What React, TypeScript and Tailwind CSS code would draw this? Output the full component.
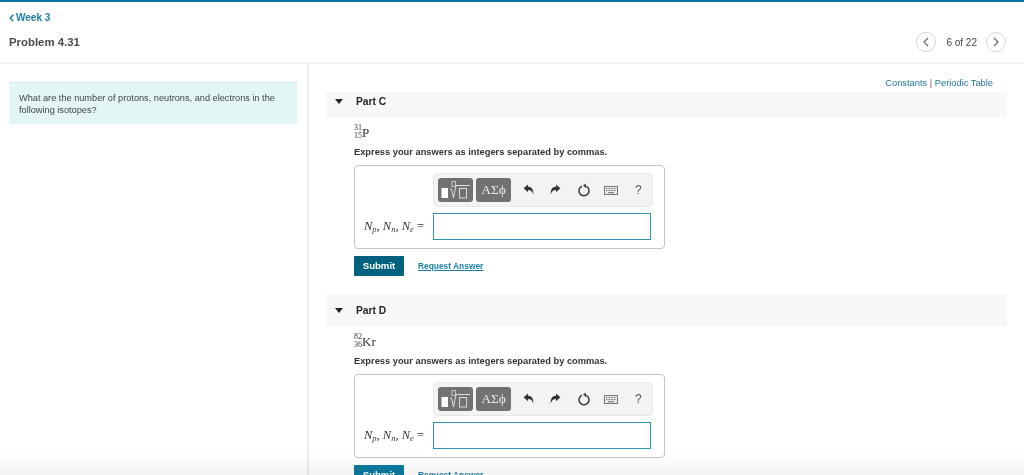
const sans = { fontFamily: '"Liberation Sans", Arial, sans-serif' };

function ChevronCircle({ dir }: { dir: "left" | "right" }) {
  return (
    <div className="w-[20px] h-[20px] rounded-full border border-[#d5d5d5] flex items-center justify-center bg-white">
      <svg width="8" height="10" viewBox="0 0 8 10" fill="none" stroke="#666" strokeWidth="1.2">
        <path d={dir === "left" ? "M6 1 L2 5 L6 9" : "M2 1 L6 5 L2 9"} />
      </svg>
    </div>
  );
}

function TemplatesIcon() {
  return (
    <svg width="30" height="19" viewBox="0 0 30 19" fill="none">
      <rect x="0.5" y="7" width="6.5" height="10" fill="#fff" />
      <rect x="11" y="0.5" width="3.5" height="5" stroke="#d8d8d8" strokeWidth="0.8" />
      <path d="M9 8 L10.5 8 L12.5 17 L15 4.5 L29 4.5" stroke="#e4e4e4" strokeWidth="0.9" />
      <rect x="18.5" y="7.5" width="7" height="9.5" stroke="#e4e4e4" strokeWidth="0.9" />
    </svg>
  );
}

function UndoIcon({ flip }: { flip?: boolean }) {
  return (
    <svg width="11" height="12" viewBox="0 0 10 11" className={flip ? "-scale-x-100" : ""}>
      <path d="M0.5 4 L4.5 0.5 V2.6 C7.8 2.6 9.6 5 9.4 9.8 C8.7 7.3 7.4 5.6 4.5 5.6 V7.6 Z" fill="#333" />
    </svg>
  );
}

function ResetIcon() {
  return (
    <svg width="12" height="14" viewBox="0 0 12 14" fill="none">
      <path d="M4 3.2 A5 5 0 1 0 8.4 3.4" stroke="#3f3f3f" strokeWidth="1.5" />
      <path d="M7.2 0.6 L7.6 5.4 L4.4 2.6 Z" fill="#3f3f3f" transform="translate(0.6 -0.2)" />
    </svg>
  );
}

function KeyboardIcon() {
  return (
    <svg width="14" height="9" viewBox="0 0 14 9" fill="none">
      <rect x="0.5" y="0.5" width="13" height="8" fill="#e9e9e9" stroke="#777" />
      <path d="M2 2.5 H12 M2 4.5 H12" stroke="#777" strokeWidth="1" strokeDasharray="1 0.6" />
      <path d="M4 6.7 H10" stroke="#777" strokeWidth="1.1" />
    </svg>
  );
}

function Toolbar() {
  return (
    <div className="h-[34px] w-[220px] ml-auto mr-[11px] bg-[#f3f3f3] border border-[#e8e8e8] rounded-[4px] flex items-center pl-[4px]">
      <div className="w-[35px] h-[24px] rounded-[3px] bg-[#727272] flex items-center justify-center">
        <TemplatesIcon />
      </div>
      <div
        className="w-[35px] h-[24px] ml-[3px] rounded-[3px] bg-[#727272] flex items-center justify-center text-[13.5px] text-[#e8e8e8]"
        style={{ fontFamily: '"Liberation Serif", serif' }}
      >
        ΑΣϕ
      </div>
      <div className="ml-[12px] w-[11px] flex justify-center"><UndoIcon /></div>
      <div className="ml-[16px] w-[11px] flex justify-center"><UndoIcon flip /></div>
      <div className="ml-[17px] w-[12px] flex justify-center"><ResetIcon /></div>
      <div className="ml-[14px] w-[14px] flex justify-center"><KeyboardIcon /></div>
      <div className="ml-[17px] text-[12px] text-[#555]">?</div>
    </div>
  );
}

function Mass({ top, bottom, symbol }: { top: string; bottom: string; symbol: string }) {
  return (
    <div className="h-[16px] flex items-center text-[#333]" style={{ fontFamily: '"Liberation Serif", serif' }}>
      <span className="flex flex-col text-[8px] leading-[8px] items-end">
        <span>{top}</span>
        <span>{bottom}</span>
      </span>
      <span className="text-[13px] leading-none">{symbol}</span>
    </div>
  );
}

function Part({
  title,
  top,
  bottom,
  symbol,
  headerClass,
  submitClass,
}: {
  title: string;
  top: string;
  bottom: string;
  symbol: string;
  headerClass: string;
  submitClass: string;
}) {
  return (
    <section>
      <div className={`bg-[#f7f7f7] flex pl-[9px] ${headerClass}`}>
        <svg width="8" height="5" viewBox="0 0 8 5" className="mt-[3px]">
          <path d="M0 0 H8 L4 5 Z" fill="#222" />
        </svg>
        <span className="ml-[13px] text-[10.2px] font-bold leading-[12px] text-[#222]">{title}</span>
      </div>
      <div className="pl-[28px] pt-[7px]">
        <Mass top={top} bottom={bottom} symbol={symbol} />
        <p className="mt-[6px] text-[9.3px] leading-[12px] font-bold text-[#333]">
          Express your answers as integers separated by commas.
        </p>
        <div className="mt-[7px] w-[311px] h-[84px] border border-[#c4c4c4] rounded-[4px] pt-[7px] bg-white">
          <Toolbar />
          <div className="mt-[6px] flex items-center pl-[9px]">
            <span
              className="w-[69px] whitespace-nowrap text-[12.5px] leading-none italic text-[#333]"
              style={{ fontFamily: '"Liberation Serif", serif' }}
            >
              N<sub className="text-[8.5px]">p</sub>, N<sub className="text-[8.5px]">n</sub>, N
              <sub className="text-[8.5px]">e</sub> <span className="not-italic">=</span>
            </span>
            <div className="w-[218px] h-[27px] border border-[#2f95b5] bg-white" />
          </div>
        </div>
        <div className="mt-[7px] flex items-center">
          <button className={`w-[50px] h-[20px] rounded-[1px] text-white text-[9.6px] font-bold ${submitClass}`}>
            Submit
          </button>
          <a className="ml-[14px] text-[8.4px] font-bold underline text-[#1a80a8]">Request Answer</a>
        </div>
      </div>
    </section>
  );
}

export default function App() {
  return (
    <div className="relative w-[1024px] h-[475px] overflow-hidden bg-white" style={sans}>
      <div className="h-[2px] bg-[#00739e]" />
      <header className="h-[60px] px-[9px] flex flex-col">
        <a className="mt-[10px] flex items-center text-[10px] leading-[12px] font-bold text-[#1a7da3]">
          <svg width="5" height="8" viewBox="0 0 5 8" fill="none" stroke="#1a7da3" strokeWidth="1.4" className="mr-[2px]">
            <path d="M4.3 0.7 L1.2 4 L4.3 7.3" />
          </svg>
          Week 3
        </a>
        <div className="mt-[8px] h-[20px] flex items-center justify-between">
          <h1 className="text-[11.4px] leading-[14px] font-bold text-[#4a4a4a]">Problem 4.31</h1>
          <div className="flex items-center mr-[9px]">
            <ChevronCircle dir="left" />
            <span className="ml-[10px] mr-[9px] text-[10px] text-[#444]">6 of 22</span>
            <ChevronCircle dir="right" />
          </div>
        </div>
      </header>
      <div className="h-[2px] bg-[#f3f3f3]" />
      <main className="flex h-[411px]">
        <aside className="w-[309px] shrink-0 border-r-2 border-[#eceef0] pt-[18px] pl-[9px] pr-[10px]">
          <div className="h-[42px] bg-[#e2f6f6] border-t border-[#d5e6e6] px-[10px] pt-[9px] text-[9.2px] leading-[12px] text-[#444]">
            What are the number of protons, neutrons, and electrons in the following isotopes?
          </div>
        </aside>
        <div className="flex-1 pl-[17px] pr-[17px]">
          <div className="h-[28px] pt-[13px] pr-[14px] text-right text-[9.3px] leading-[12px] text-[#1f7396]">
            Constants <span className="text-[#a5502f]">|</span> Periodic Table
          </div>
          <Part title="Part C" top="31" bottom="15" symbol="P" headerClass="h-[25px] pt-[4px]" submitClass="bg-[#00627f]" />
          <div className="h-[18px]" />
          <Part title="Part D" top="82" bottom="36" symbol="Kr" headerClass="h-[32px] pt-[11px]" submitClass="bg-[#0a7a9f]" />
        </div>
      </main>
      <div className="absolute left-0 right-0 bottom-0 h-[22px] pointer-events-none mix-blend-multiply bg-gradient-to-b from-white to-[#f4f4f4]" />
    </div>
  );
}
